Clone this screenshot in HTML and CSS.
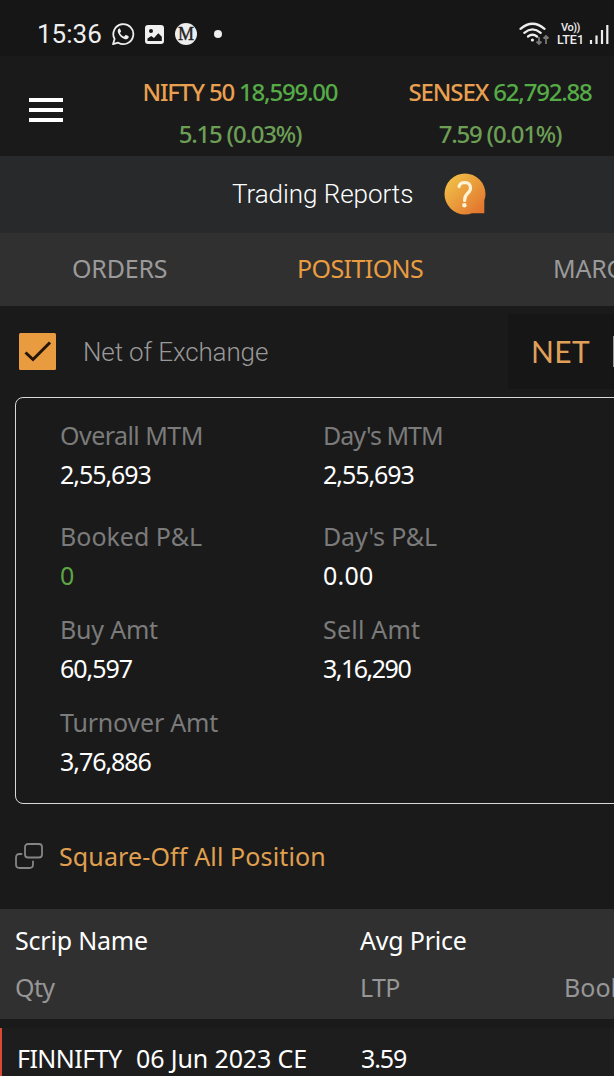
FILE: index.html
```html
<!DOCTYPE html>
<html lang="en">
<head>
  <meta charset="UTF-8" />
  <meta name="viewport" content="width=device-width, initial-scale=1.0" />
  <title>Trading Reports</title>
  <link rel="stylesheet" href="styles.css">
</head>
<body>
  <div class="statusbar">
    <span class="clock">15:36</span>
    <svg class="ic-whatsapp" width="24" height="24" viewBox="0 0 24 24">
      <path d="M2 22.2 3.6 17A10 10 0 1 1 7.2 20.7Z" fill="none" stroke="#eee" stroke-width="1.8" stroke-linejoin="round"/>
      <path d="M8.2 6.5c-1.6 1-1.8 2.7-1 4.4 1.2 2.8 3.4 4.9 6.2 6 1.8.7 3.6.2 4.2-1.5.2-.7.1-1-.4-1.3l-2-1c-.5-.2-.8-.1-1.1.3l-.7.9c-.3.3-.5.3-.9.1-1.5-.7-2.6-1.7-3.3-3-.2-.4-.1-.6.1-.9l.6-.8c.2-.3.2-.5.1-.8l-.9-2c-.2-.4-.5-.5-.9-.4Z" fill="#eee"/>
    </svg>
    <svg class="ic-photo" width="19" height="19" viewBox="0 0 19 19">
      <rect width="19" height="19" rx="3" fill="#f0f0f0"/>
      <circle cx="6" cy="6" r="2" fill="#161616"/>
      <path d="M2.500 16v-2.500l3.700-2.500 2.800 2 4.300-4.800 3.500 3.500V16Z" fill="#161616"/>
    </svg>
    <span class="ic-m">M</span>
    <span class="dot"></span>
    <svg class="ic-wifi" width="31" height="24" viewBox="0 0 31 24">
      <g fill="none" stroke="#eee" stroke-width="2.3" stroke-linecap="round">
        <path d="M1.5 6.800Q13.500-3.200 25.500 6.800"/>
        <path d="M5.300 10.800Q13.500 4 21.700 10.800"/>
        <path d="M9 14.500Q13.500 11 18 14.500"/>
      </g>
      <circle cx="13.4" cy="18" r="1.6" fill="#eee"/>
      <path d="M20 15v7M17.500 19.500 20 22l2.500-2.500M27 22v-8M24.500 16.500 27 14l2.500 2.500" fill="none" stroke="#777" stroke-width="1.8"/>
    </svg>
    <span class="lte"><b class="vo">Vo))</b><b>LTE1</b></span>
    <svg class="ic-signal" width="20" height="22" viewBox="0 0 20 22">
      <path d="M2 17v4M7.500 12.500V21M13 7v14M18.300 2v19" stroke="#eee" stroke-width="2.2" fill="none"/>
    </svg>
  </div>

  <div class="indices">
    <div class="menu"><i></i><i></i><i></i></div>
    <div class="index nifty">
      <p><span class="name">NIFTY 50</span><span class="price">18,599.00</span></p>
      <p class="change">5.15 (0.03%)</p>
    </div>
    <div class="index sensex">
      <p><span class="name">SENSEX</span><span class="price">62,792.88</span></p>
      <p class="change">7.59 (0.01%)</p>
    </div>
  </div>

  <div class="title">
    <h1>Trading Reports</h1>
    <svg width="42" height="42" viewBox="0 0 42 42">
      <defs>
        <linearGradient id="bubble" x1="0" y1="0" x2="1" y2="1">
          <stop offset="0.2" stop-color="#efb744"/>
          <stop offset="0.9" stop-color="#e2762f"/>
        </linearGradient>
      </defs>
      <path d="M21 .5A20.500 20.500 0 1 0 21 41.500Q25 41.500 28 40.300H40.300V27.500Q41.500 24.500 41.500 21A20.500 20.500 0 0 0 21 .5Z" fill="url(#bubble)"/>
      <path d="M15 13.500Q16 9.500 20.800 9.500 26.500 9.800 26.500 15 26.500 18 23.500 20.500 20.600 23 20.600 27.500" fill="none" stroke="#fff3d6" stroke-width="3.2" stroke-linecap="round"/>
      <circle cx="20.4" cy="32.3" r="2.2" fill="#fff3d6"/>
    </svg>
  </div>

  <div class="tabs">
    <span class="tab orders">ORDERS</span>
    <span class="tab positions active">POSITIONS</span>
    <span class="tab margin">MARGIN</span>
  </div>

  <div class="filter">
    <svg class="check" width="37" height="37" viewBox="0 0 37 37">
      <rect width="37" height="37" rx="1.5" fill="#e99b40"/>
      <path d="M6.500 19.500 14 26.500 31 9.500" fill="none" stroke="#24150a" stroke-width="3"/>
    </svg>
    <span class="net-label">Net of Exchange</span>
    <div class="net-switch"><span>NET</span><i></i></div>
  </div>

  <div class="summary">
    <div class="item"><label class="overall">Overall MTM</label><b>2,55,693</b></div>
    <div class="item"><label class="daym">Day's MTM</label><b>2,55,693</b></div>
    <div class="item"><label>Booked P&amp;L</label><b class="up">0</b></div>
    <div class="item"><label class="dayp">Day's P&amp;L</label><b class="zero">0.00</b></div>
    <div class="item"><label class="buy">Buy Amt</label><b>60,597</b></div>
    <div class="item"><label class="sell">Sell Amt</label><b class="sell-value">3,16,290</b></div>
    <div class="item"><label class="turnover">Turnover Amt</label><b>3,76,886</b></div>
  </div>

  <div class="squareoff">
    <svg width="28" height="26" viewBox="0 0 28 26" fill="none" stroke="#858585" stroke-width="1.8">
      <rect x="10" y="1" width="17" height="13.5" rx="3"/>
      <path d="M6.500 11H4.500Q1 11 1 14.500V21.500Q1 25 4.500 25H14.500Q18 25 18 21.500V18.500" stroke-linecap="round"/>
    </svg>
    <a>Square-Off All Position</a>
  </div>

  <div class="thead">
    <span class="head">Scrip Name</span><span class="head">Avg Price</span><span></span>
    <span class="sub">Qty</span><span class="sub">LTP</span><span class="sub booked">Booked</span>
  </div>

  <div class="row">
    <span class="fin">FINNIFTY</span><span class="expiry">06 Jun 2023 CE</span><span class="avg">3.59</span>
  </div>
</body>
</html>
```
FILE: styles.css
```css
* {
  box-sizing: border-box;
}

html, body {
  width: 614px;
  height: 1076px;
  margin: 0;
  overflow: hidden;
}

body {
  background: #1a1a1a;
  color: #fff;
  font-family: "Noto Sans", sans-serif;
  font-size: 25px;
  line-height: 30px;
  white-space: nowrap;
}

p, h1 {
  margin: 0;
}

/* phone status bar */
.statusbar {
  display: flex;
  align-items: center;
  height: 56px;
  padding: 12px 5px 0 37px;
  background: #161616;
  color: #eee;
}

.clock {
  width: 74px;
  font-family: Roboto, sans-serif;
  font-size: 26px;
}

.ic-photo {
  margin-left: 10px;
}

.ic-m {
  width: 22px;
  height: 22px;
  margin-left: 11px;
  border-radius: 50%;
  background: #eee;
  color: #222;
  font: 18px/22px "Liberation Serif", serif;
  text-align: center;
  -webkit-text-stroke: 0.4px #222;
}

.dot {
  width: 8px;
  height: 8px;
  margin-left: 17px;
  border-radius: 50%;
  background: #eee;
}

.ic-wifi {
  margin-left: auto;
}

.lte {
  margin: 0 5px 0 7px;
  font: 12.5px/12px Roboto, sans-serif;
  text-align: center;
}

.lte b {
  display: block;
  font-weight: 500;
}

.lte .vo {
  font-size: 11px;
  letter-spacing: -0.5px;
}

/* index quotes */
.indices {
  display: flex;
  height: 100px;
}

.menu {
  display: flex;
  flex-direction: column;
  gap: 6px;
  width: 34px;
  margin: 42px 80px 0 29px;
}

.menu i {
  height: 4px;
  background: #fff;
}

.index {
  width: 194px;
  padding-top: 15px;
  font-size: 24px;
  font-weight: 500;
  line-height: 42px;
  letter-spacing: -1.2px;
  text-align: center;
}

.sensex {
  width: 184px;
  margin-left: 71px;
}

.sensex .name {
  letter-spacing: -1.1px;
}

.index p {
  display: flex;
  justify-content: center;
  gap: 5px;
}

.index .name {
  color: #e9a050;
}

.index .price {
  color: #55ab46;
}

.index .change {
  color: #6c9f55;
}

.title {
  display: flex;
  align-items: center;
  height: 77px;
  padding: 0 0 2px 232px;
  gap: 31px;
  background: #28292b;
}

.title h1 {
  font: 300 26px/30px Roboto, sans-serif;
  letter-spacing: -0.05px;
}

.tabs {
  display: flex;
  align-items: center;
  height: 73px;
  padding-bottom: 3px;
  background: #303030;
  color: #9a9a9a;
}

.tab {
  flex: none;
  letter-spacing: -0.2px;
}

.orders {
  width: 225px;
  margin-left: 72px;
}

.positions {
  width: 256px;
  letter-spacing: -0.6px;
}

.active {
  color: #e99c40;
}

.filter {
  display: flex;
  align-items: center;
  height: 91px;
  padding-left: 19px;
}

.net-label {
  width: 425px;
  margin-left: 27px;
  color: #999;
  font: 300 26px/30px Roboto, sans-serif;
  letter-spacing: -0.13px;
}

.net-switch {
  display: flex;
  align-items: center;
  flex: none;
  width: 106px;
  height: 75px;
  padding: 0 0 1px 23px;
  background: #161616;
  color: #e0a05a;
  font: 30px/36px Lato, sans-serif;
  letter-spacing: 0.4px;
}

.net-switch i {
  width: 1px;
  height: 31px;
  margin-left: auto;
  background: #999;
}

/* totals card, runs off the right edge */
.summary {
  display: grid;
  grid-template-columns: 263px 263px;
  grid-template-rows: 101px 93px 93px auto;
  width: 640px;
  height: 407px;
  margin-left: 15px;
  padding: 22px 0 0 44px;
  border: 1px solid #d8d8d8;
  border-radius: 8px;
}

.item label, .item b {
  display: block;
}

.item label {
  color: #7b7b7b;
}

.item b {
  margin-top: 9px;
  font-weight: 400;
  letter-spacing: -1.05px;
}

.item .up {
  color: #5da445;
}

.item .zero {
  letter-spacing: 0.2px;
}

.item .sell-value {
  letter-spacing: -1.5px;
}

.overall {
  letter-spacing: -0.55px;
}

.daym {
  letter-spacing: -1px;
}

.dayp, .buy, .turnover {
  letter-spacing: -0.2px;
}

.sell {
  letter-spacing: 0.2px;
}

.squareoff {
  display: flex;
  align-items: center;
  gap: 16px;
  height: 105px;
  padding: 0 0 2px 15px;
  color: #e0a050;
  letter-spacing: 0.13px;
}

.thead {
  display: grid;
  grid-template-columns: 345px 204px 100px;
  grid-template-rows: 47px 30px;
  height: 110px;
  padding: 16px 0 0 15px;
  background: #303030;
}

.head {
  letter-spacing: -0.2px;
}

.sub {
  color: #969696;
  letter-spacing: -0.6px;
}

.booked {
  letter-spacing: 0;
}

.row {
  display: flex;
  height: 48px;
  margin-top: 9px;
  padding: 15px 0 0 15px;
  border-left: 2px solid #d94a35;
  background: #1d1d1d;
}

.fin {
  width: 119px;
  letter-spacing: -0.55px;
}

.expiry {
  width: 225px;
  letter-spacing: -0.12px;
}

.avg {
  letter-spacing: -1.1px;
}
```
